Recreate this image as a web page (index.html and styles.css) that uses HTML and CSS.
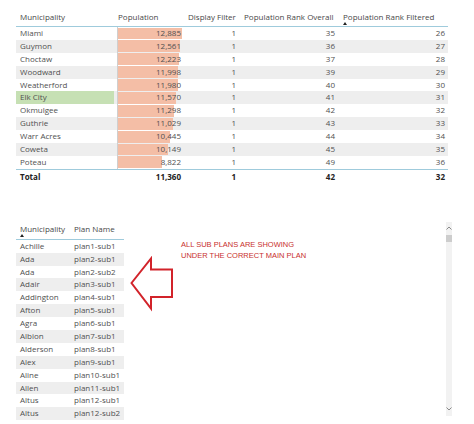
FILE: index.html
```html
<!DOCTYPE html>
<html>
<head>
<meta charset="utf-8">
<link rel="stylesheet" href="styles.css">
</head>
<body>
<div class="page">
  <div class="top">
    <div class="row head">
      <div class="c1">Municipality</div>
      <div class="c2">Population</div>
      <div class="c3">Display Filter</div>
      <div class="c4">Population Rank Overall</div>
      <div class="c5">Population Rank Filtered<span class="sort"></span></div>
    </div>
    <div class="row"><div class="c1">Miami</div><div class="c2"><div class="bar" style="width:64px"></div><span>12,885</span></div><div class="c3">1</div><div class="c4">35</div><div class="c5">26</div></div>
    <div class="row alt"><div class="c1">Guymon</div><div class="c2"><div class="bar" style="width:62.4px"></div><span>12,561</span></div><div class="c3">1</div><div class="c4">36</div><div class="c5">27</div></div>
    <div class="row"><div class="c1">Choctaw</div><div class="c2"><div class="bar" style="width:60.7px"></div><span>12,223</span></div><div class="c3">1</div><div class="c4">37</div><div class="c5">28</div></div>
    <div class="row alt"><div class="c1">Woodward</div><div class="c2"><div class="bar" style="width:59.6px"></div><span>11,998</span></div><div class="c3">1</div><div class="c4">39</div><div class="c5">29</div></div>
    <div class="row"><div class="c1">Weatherford</div><div class="c2"><div class="bar" style="width:59.5px"></div><span>11,980</span></div><div class="c3">1</div><div class="c4">40</div><div class="c5">30</div></div>
    <div class="row alt"><div class="c1 hl">Elk City</div><div class="c2"><div class="bar" style="width:57.5px"></div><span>11,570</span></div><div class="c3">1</div><div class="c4">41</div><div class="c5">31</div></div>
    <div class="row"><div class="c1">Okmulgee</div><div class="c2"><div class="bar" style="width:56.1px"></div><span>11,298</span></div><div class="c3">1</div><div class="c4">42</div><div class="c5">32</div></div>
    <div class="row alt"><div class="c1">Guthrie</div><div class="c2"><div class="bar" style="width:54.8px"></div><span>11,029</span></div><div class="c3">1</div><div class="c4">43</div><div class="c5">33</div></div>
    <div class="row"><div class="c1">Warr Acres</div><div class="c2"><div class="bar" style="width:51.9px"></div><span>10,445</span></div><div class="c3">1</div><div class="c4">44</div><div class="c5">34</div></div>
    <div class="row alt"><div class="c1">Coweta</div><div class="c2"><div class="bar" style="width:50.4px"></div><span>10,149</span></div><div class="c3">1</div><div class="c4">45</div><div class="c5">35</div></div>
    <div class="row"><div class="c1">Poteau</div><div class="c2"><div class="bar" style="width:43.8px"></div><span>8,822</span></div><div class="c3">1</div><div class="c4">49</div><div class="c5">36</div></div>
    <div class="row total"><div class="c1">Total</div><div class="c2"><span>11,360</span></div><div class="c3">1</div><div class="c4">42</div><div class="c5">32</div></div>
  </div>

  <div class="bottom">
    <div class="plans">
      <div class="prow phead"><div class="p1">Municipality<span class="sort"></span></div><div class="p2">Plan Name</div></div>
      <div class="prow"><div class="p1">Achille</div><div class="p2">plan1-sub1</div></div>
      <div class="prow alt"><div class="p1">Ada</div><div class="p2">plan2-sub1</div></div>
      <div class="prow"><div class="p1">Ada</div><div class="p2">plan2-sub2</div></div>
      <div class="prow alt"><div class="p1">Adair</div><div class="p2">plan3-sub1</div></div>
      <div class="prow"><div class="p1">Addington</div><div class="p2">plan4-sub1</div></div>
      <div class="prow alt"><div class="p1">Afton</div><div class="p2">plan5-sub1</div></div>
      <div class="prow"><div class="p1">Agra</div><div class="p2">plan6-sub1</div></div>
      <div class="prow alt"><div class="p1">Albion</div><div class="p2">plan7-sub1</div></div>
      <div class="prow"><div class="p1">Alderson</div><div class="p2">plan8-sub1</div></div>
      <div class="prow alt"><div class="p1">Alex</div><div class="p2">plan9-sub1</div></div>
      <div class="prow"><div class="p1">Aline</div><div class="p2">plan10-sub1</div></div>
      <div class="prow alt"><div class="p1">Allen</div><div class="p2">plan11-sub1</div></div>
      <div class="prow"><div class="p1">Altus</div><div class="p2">plan12-sub1</div></div>
      <div class="prow alt"><div class="p1">Altus</div><div class="p2">plan12-sub2</div></div>
    </div>
    <div class="note">ALL SUB PLANS ARE SHOWING<br>UNDER THE CORRECT MAIN PLAN</div>
    <svg class="arrow" width="46" height="56" viewBox="129 256 46 56">
      <polygon points="131.5,283 151,258.5 151,269.5 172,269.5 172,297 151,297 151,308.5" fill="none" stroke="#d2232a" stroke-width="2" stroke-linejoin="miter"/>
    </svg>
    <div class="scroll">
      <svg class="chev" width="6" height="4" viewBox="0 0 6 4"><path d="M0.5 3.5 L3 1 L5.5 3.5" fill="none" stroke="#8a8a8a" stroke-width="1"/></svg>
      <div class="thumb"></div>
      <div class="track"></div>
      <svg class="chev" width="6" height="4" viewBox="0 0 6 4"><path d="M0.5 0.5 L3 3 L5.5 0.5" fill="none" stroke="#8a8a8a" stroke-width="1"/></svg>
    </div>
  </div>
</div>
</body>
</html>
```

FILE: styles.css
```css
html, body {
  margin: 0;
  padding: 0;
  background: #ffffff;
}
body {
  font-family: "Open Sans", "Noto Sans", sans-serif;
  font-size: 8px;
  color: #505050;
  width: 474px;
  height: 424px;
  overflow: hidden;
}
.page {
  padding-top: 8px;
}
.top {
  margin-left: 16px;
  width: 432px;
}
.row {
  display: grid;
  grid-template-columns: 98px 70px 54px 99px 111px;
  height: 12.9px;
  line-height: 12.9px;
}
.row.alt {
  background: #eeeeee;
}
.row > div {
  white-space: nowrap;
}
.c1 {
  padding-left: 4px;
}
.c1.hl {
  background: #c6e0b4;
}
.c2 {
  margin-left: 3px;
  border-left: 1px solid #cfcfcf;
  padding-right: 2px;
  position: relative;
  text-align: right;
}
.c2 .bar {
  position: absolute;
  left: 0;
  top: 0.5px;
  bottom: 0.5px;
  background: #f4bea6;
}
.c2 span {
  position: relative;
  padding-right: 1px;
}
.c3 {
  text-align: right;
  padding-right: 2px;
}
.c4 {
  text-align: right;
  padding-right: 2px;
}
.c5 {
  text-align: right;
  padding-right: 3px;
}
.row.head {
  height: 18px;
  line-height: 18px;
  border-bottom: 1px solid #9fcbdc;
  color: #484848;
}
.row.head > div {
  text-align: left;
  position: relative;
}
.row.head .c2 {
  border-left: none;
  margin-left: 4px;
}
.row.head .c3 {
  padding-left: 4px;
}
.row.head .c4,
.row.head .c5 {
  padding-left: 6px;
}
.sort {
  position: absolute;
  width: 0;
  height: 0;
  border-left: 2.5px solid transparent;
  border-right: 2.5px solid transparent;
  border-bottom: 3px solid #222222;
}
.row.head .sort {
  left: 6px;
  top: 14px;
}
.row.total {
  border-top: 1px solid #9fcbdc;
  height: 14px;
  line-height: 14px;
  font-weight: 700;
  color: #222222;
}
.row.total .c2 {
  border-left-color: transparent;
}

.bottom {
  position: relative;
  margin-top: 36px;
  height: 220px;
}
.plans {
  margin-left: 16px;
  width: 108px;
}
.prow {
  display: grid;
  grid-template-columns: 54px 54px;
  height: 12.9px;
  line-height: 12.9px;
}
.prow.alt {
  background: #eeeeee;
}
.prow > div {
  padding-left: 4px;
  white-space: nowrap;
}
.prow.phead {
  height: 19px;
  line-height: 18px;
  border-bottom: 1px solid #9fcbdc;
  color: #484848;
}
.prow.phead > div {
  position: relative;
}
.prow.phead .sort {
  left: 4px;
  top: 14px;
}
.note {
  position: absolute;
  left: 181px;
  top: 20.5px;
  font-family: "Liberation Sans", Arial, sans-serif;
  font-size: 7.5px;
  line-height: 10.5px;
  color: #c8302e;
  white-space: nowrap;
}
.arrow {
  position: absolute;
  left: 129px;
  top: 36px;
}
.scroll {
  position: absolute;
  left: 446px;
  top: 2px;
  width: 6px;
  height: 194px;
  background: #f2f2f2;
  display: flex;
  flex-direction: column;
  align-items: center;
  padding: 4px 0 5px;
  box-sizing: border-box;
}
.scroll .chev {
  flex: none;
}
.scroll .thumb {
  flex: none;
  width: 6px;
  height: 7px;
  margin-top: 5px;
  background: #cdcdcd;
}
.scroll .track {
  flex: 1;
}
```
